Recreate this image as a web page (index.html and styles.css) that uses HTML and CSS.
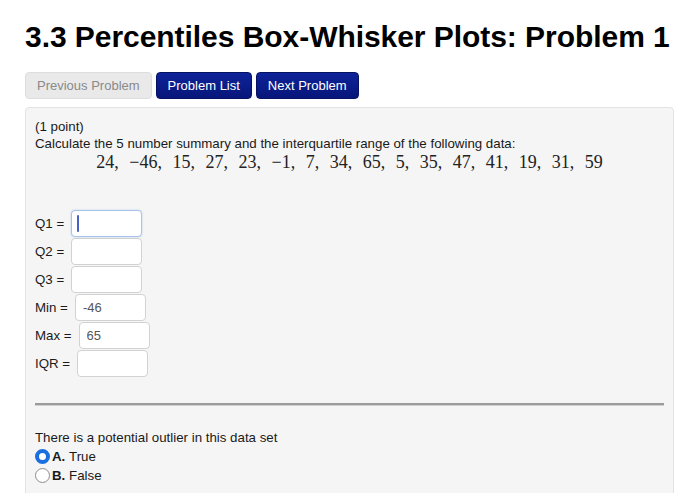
FILE: index.html
```html
<!DOCTYPE html>
<html>
<head>
<meta charset="utf-8">
<link rel="stylesheet" href="styles.css">
</head>
<body>
<div class="page">
  <h1 class="title">3.3 Percentiles Box-Whisker Plots: Problem 1</h1>
  <div class="nav">
    <span class="btn btn-disabled">Previous Problem</span>
    <span class="btn btn-primary">Problem List</span>
    <span class="btn btn-primary">Next Problem</span>
  </div>
  <div class="panel">
    <div class="line">(1 point)</div>
    <div class="line">Calculate the 5 number summary and the interquartile range of the following data:</div>
    <div class="math">24, −46, 15, 27, 23, −1, 7, 34, 65, 5, 35, 47, 41, 19, 31, 59</div>
    <div class="answers">
      <div class="row"><span class="lbl">Q1 =</span><span class="field-wrap"><input class="field field-focus" type="text"><span class="caret"></span></span></div>
      <div class="row"><span class="lbl">Q2 =</span><input class="field" type="text"></div>
      <div class="row"><span class="lbl">Q3 =</span><input class="field" type="text"></div>
      <div class="row"><span class="lbl">Min =</span><input class="field" type="text" value="-46"></div>
      <div class="row"><span class="lbl">Max =</span><input class="field" type="text" value="65"></div>
      <div class="row"><span class="lbl">IQR =</span><input class="field" type="text"></div>
    </div>
    <hr class="rule">
    <div class="question">There is a potential outlier in this data set</div>
    <label class="choice"><input class="radio" type="radio" name="o" checked><b>A.</b>&nbsp;True</label>
    <label class="choice"><input class="radio" type="radio" name="o"><b>B.</b>&nbsp;False</label>
  </div>
</div>
</body>
</html>
```
FILE: styles.css
```css
html, body {
  margin: 0;
  padding: 0;
  background: #ffffff;
}
body {
  font-family: "Liberation Sans", Arial, sans-serif;
  color: #1a1a1a;
  overflow: hidden;
}
.page {
  padding: 19px 26px 0 25px;
}
.title {
  margin: 0;
  font-size: 30px;
  line-height: 36px;
  font-weight: bold;
  color: #000;
  letter-spacing: -0.05px;
}
.nav {
  margin-top: 17px;
  display: flex;
  gap: 4px;
}
.btn {
  display: inline-flex;
  align-items: center;
  height: 27px;
  box-sizing: border-box;
  padding: 0 11px;
  font-size: 13px;
  border-radius: 4px;
  border: 1px solid transparent;
}
.btn-disabled {
  background: #e9e9e9;
  border-color: #dddddd;
  color: #8a8a8a;
}
.btn-primary {
  background: linear-gradient(#0e2399, #07167a);
  border-color: #061264;
  color: #ffffff;
}
.panel {
  margin-top: 8px;
  background: #f5f5f5;
  border: 1px solid #e3e3e3;
  border-radius: 4px;
  padding: 10px 9px 30px 9px;
  font-size: 13.3px;
}
.line {
  line-height: 17px;
}
.math {
  font-family: "Liberation Serif", "Times New Roman", serif;
  font-size: 18px;
  line-height: 20px;
  text-align: center;
  word-spacing: 6px;
  color: #222;
}
.answers {
  margin-top: 38px;
}
.row {
  display: flex;
  align-items: flex-start;
  height: 28px;
  gap: 7px;
}
.lbl {
  line-height: 27px;
}
.field-wrap {
  position: relative;
  display: inline-block;
  height: 27px;
}
.field {
  width: 71px;
  height: 27px;
  box-sizing: border-box;
  margin: 0;
  border: 1px solid #d2d2d2;
  border-radius: 4px;
  background: #ffffff;
  padding: 0 7px;
  font-family: "Liberation Sans", Arial, sans-serif;
  font-size: 13px;
  color: #555555;
  outline: none;
}
.field-focus {
  border-color: #a9c2ec;
  box-shadow: 0 0 2px rgba(80, 130, 220, 0.35);
}
.caret {
  position: absolute;
  left: 6px;
  top: 5px;
  width: 2px;
  height: 17px;
  background: #4a5fc8;
  border-radius: 1px;
}
.rule {
  margin: 25px 0 0 0;
  border: 0;
  height: 2px;
  background: #9b9b9b;
  border-bottom: 1px solid #cfcfcf;
}
.question {
  margin-top: 22px;
  line-height: 19px;
}
.choice {
  display: flex;
  align-items: center;
  height: 19px;
}
.choice b {
  margin-left: 2px;
}
.radio {
  appearance: none;
  -webkit-appearance: none;
  margin: 0;
  width: 15px;
  height: 15px;
  box-sizing: border-box;
  border-radius: 50%;
  border: 1px solid #8c8c8c;
  background: #ffffff;
}
.radio:checked {
  border: 4px solid #1a6fe0;
  background: #ffffff;
}
```
